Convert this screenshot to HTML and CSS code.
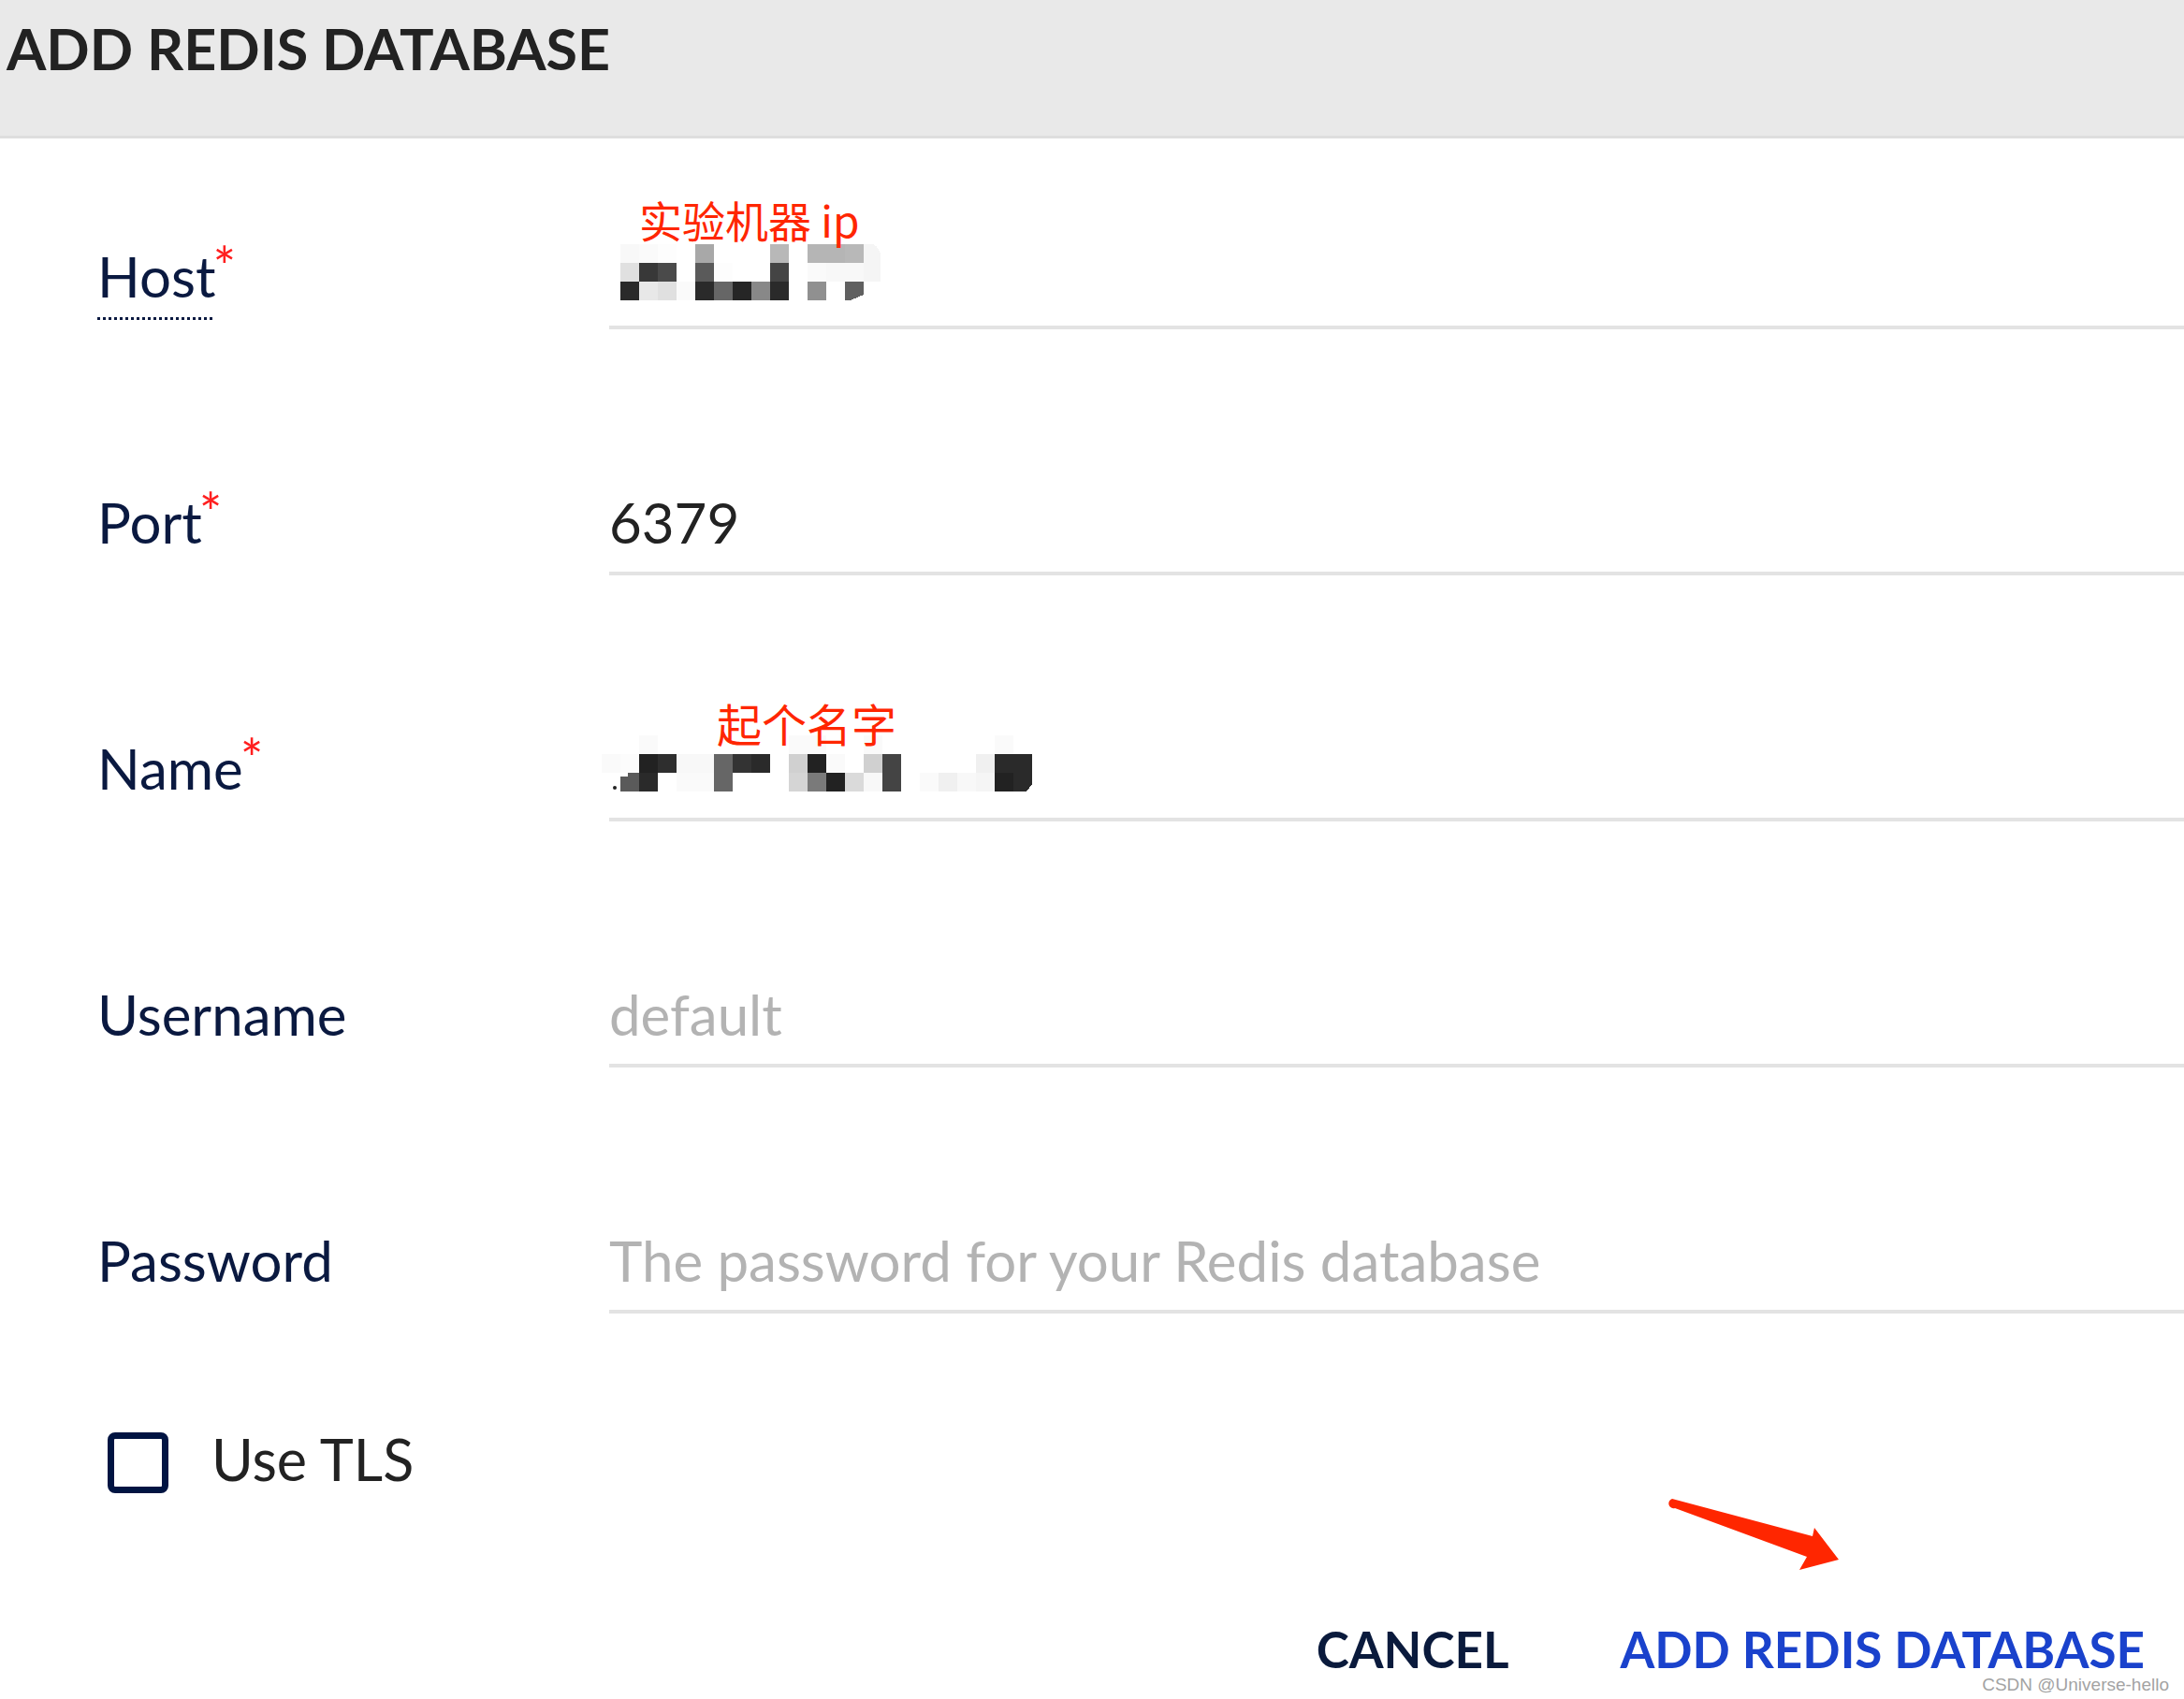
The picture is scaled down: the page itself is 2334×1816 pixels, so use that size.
FILE: index.html
```html
<!DOCTYPE html>
<html lang="en">
<head>
<meta charset="utf-8">
<title>Add Redis Database</title>
<link rel="stylesheet" href="styles.css">
</head>
<body>
<div class="dialog">
  <header class="dialog-header">
    <h1 class="dialog-title">ADD REDIS DATABASE</h1>
  </header>

  <form class="form">
    <div class="rows">
      <div class="row">
        <label class="label"><span class="abbr">Host</span><span class="req">*</span></label>
        <div class="field">
          <svg class="mosaic mosaic-host" width="280" height="60" viewBox="0 0 280 60" shape-rendering="crispEdges">
            <rect x="0" y="0" width="20" height="20" fill="#f8f8f8"/>
            <rect x="0" y="20" width="20" height="20" fill="#e0e0e0"/>
            <rect x="0" y="40" width="20" height="20" fill="#2a2a2a"/>
            <rect x="20" y="0" width="20" height="20" fill="#fafafa"/>
            <rect x="20" y="20" width="20" height="20" fill="#383838"/>
            <rect x="20" y="40" width="20" height="20" fill="#e8e8e8"/>
            <rect x="40" y="0" width="20" height="20" fill="#fdfdfd"/>
            <rect x="40" y="20" width="20" height="20" fill="#4a4a4a"/>
            <rect x="40" y="40" width="20" height="20" fill="#e0e0e0"/>
            <rect x="60" y="40" width="20" height="20" fill="#fafafa"/>
            <rect x="80" y="0" width="20" height="20" fill="#a8a8a8"/>
            <rect x="80" y="20" width="20" height="20" fill="#5a5a5a"/>
            <rect x="80" y="40" width="20" height="20" fill="#2a2a2a"/>
            <rect x="100" y="20" width="20" height="20" fill="#fdfdfd"/>
            <rect x="100" y="40" width="20" height="20" fill="#666666"/>
            <rect x="120" y="40" width="20" height="20" fill="#262626"/>
            <rect x="140" y="40" width="20" height="20" fill="#888888"/>
            <rect x="160" y="0" width="20" height="20" fill="#b8b8b8"/>
            <rect x="160" y="20" width="20" height="20" fill="#444444"/>
            <rect x="160" y="40" width="20" height="20" fill="#2a2a2a"/>
            <rect x="200" y="0" width="20" height="20" fill="#b5b5b5"/>
            <rect x="200" y="20" width="20" height="20" fill="#fafafa"/>
            <rect x="200" y="40" width="20" height="20" fill="#909090"/>
            <rect x="220" y="0" width="20" height="20" fill="#b5b5b5"/>
            <rect x="220" y="20" width="20" height="20" fill="#f8f8f8"/>
            <rect x="240" y="0" width="20" height="20" fill="#b8b8b8"/>
            <rect x="240" y="20" width="20" height="20" fill="#f8f8f8"/>
            <path d="M240 40 H260 V54 L246 60 H240 Z" fill="#606060"/>
            <path d="M260 0 H270 Q278 4 278 14 V40 H260 Z" fill="#f5f5f5"/>
          </svg>
        </div>
      </div>

      <div class="row">
        <label class="label">Port<span class="req">*</span></label>
        <div class="field">6379</div>
      </div>

      <div class="row">
        <label class="label">Name<span class="req">*</span></label>
        <div class="field">
          <svg class="mosaic mosaic-name" width="460" height="60" viewBox="0 0 460 60" shape-rendering="crispEdges">
            <rect x="0" y="20" width="20" height="20" fill="#fafafa"/>
            <circle cx="14" cy="56" r="2" fill="#222222" shape-rendering="auto"/>
            <rect x="20" y="20" width="20" height="20" fill="#fcfcfc"/>
            <rect x="20" y="44" width="20" height="16" fill="#5a5a5a"/>
            <rect x="28" y="40" width="12" height="4" fill="#5a5a5a"/>
            <rect x="40" y="0" width="20" height="20" fill="#fafafa"/>
            <rect x="40" y="20" width="20" height="20" fill="#222222"/>
            <rect x="40" y="40" width="20" height="20" fill="#2a2a2a"/>
            <rect x="60" y="20" width="20" height="20" fill="#2e2e2e"/>
            <rect x="80" y="20" width="20" height="20" fill="#f8f8f8"/>
            <rect x="80" y="40" width="20" height="20" fill="#fafafa"/>
            <rect x="100" y="20" width="20" height="20" fill="#f8f8f8"/>
            <rect x="100" y="40" width="20" height="20" fill="#fafafa"/>
            <rect x="120" y="20" width="20" height="40" fill="#666666"/>
            <rect x="140" y="20" width="20" height="20" fill="#333333"/>
            <rect x="160" y="20" width="20" height="20" fill="#2a2a2a"/>
            <rect x="200" y="0" width="20" height="20" fill="#fafafa"/>
            <rect x="200" y="20" width="20" height="20" fill="#d0d0d0"/>
            <rect x="200" y="40" width="20" height="20" fill="#d5d5d5"/>
            <rect x="220" y="0" width="20" height="20" fill="#fafafa"/>
            <rect x="220" y="20" width="20" height="20" fill="#222222"/>
            <rect x="220" y="40" width="20" height="20" fill="#7a7a7a"/>
            <rect x="240" y="20" width="20" height="20" fill="#fafafa"/>
            <rect x="240" y="40" width="20" height="20" fill="#222222"/>
            <rect x="260" y="40" width="20" height="20" fill="#dadada"/>
            <rect x="280" y="0" width="20" height="20" fill="#fafafa"/>
            <rect x="280" y="20" width="20" height="20" fill="#d0d0d0"/>
            <rect x="280" y="40" width="20" height="20" fill="#f8f8f8"/>
            <rect x="300" y="20" width="20" height="40" fill="#444444"/>
            <rect x="340" y="40" width="20" height="20" fill="#fafafa"/>
            <rect x="360" y="40" width="20" height="20" fill="#f0f0f0"/>
            <rect x="380" y="40" width="20" height="20" fill="#f8f8f8"/>
            <rect x="400" y="20" width="20" height="20" fill="#f0f0f0"/>
            <rect x="400" y="40" width="20" height="20" fill="#f5f5f5"/>
            <rect x="420" y="0" width="20" height="20" fill="#fafafa"/>
            <rect x="420" y="20" width="20" height="20" fill="#2a2a2a"/>
            <rect x="420" y="40" width="20" height="20" fill="#222222"/>
            <path d="M440 20 H460 V52 L454 60 H440 Z" fill="#2a2a2a"/>
          </svg>
        </div>
      </div>

      <div class="row">
        <label class="label">Username</label>
        <div class="field placeholder">default</div>
      </div>

      <div class="row">
        <label class="label">Password</label>
        <div class="field placeholder">The password for your Redis database</div>
      </div>
    </div>

    <div class="check-row">
      <span class="checkbox"></span>
      <span class="check-label">Use TLS</span>
    </div>

    <div class="actions">
      <button type="button" class="btn btn-cancel">CANCEL</button>
      <button type="button" class="btn btn-primary">ADD REDIS DATABASE</button>
    </div>
  </form>

  <div class="note note-host">实验机器 ip</div>
  <div class="note note-name">起个名字</div>

  <svg class="arrow" width="200" height="100" viewBox="0 0 200 100">
    <path d="M7 7 L157 47 L159 38 L185 72 L143 83 L151 69 L10 17 A5 5 0 0 1 7 7 Z" fill="#ff2600"/>
  </svg>

  <div class="watermark">CSDN @Universe-hello</div>
</div>
</body>
</html>
```

FILE: styles.css
```css
* {
  box-sizing: border-box;
  margin: 0;
  padding: 0;
}

html,
body {
  background: #ffffff;
}

body {
  font-family: "Lato", "Noto Sans", sans-serif;
  width: 2334px;
  height: 1816px;
  overflow: hidden;
}

.dialog {
  position: relative;
  height: 1816px;
}

.dialog-header {
  height: 148px;
  background: #e9e9e9;
  border-bottom: 3px solid #dedede;
  padding: 16px 0 0 7px;
}

.dialog-title {
  font-size: 61px;
  font-weight: 700;
  line-height: 72px;
  color: #222222;
}

.form {
  display: flex;
  flex-direction: column;
  padding: 109px 0 0 104px;
}

.rows {
  display: flex;
  flex-direction: column;
  gap: 168px;
}

.row {
  display: grid;
  grid-template-columns: 547px 1fr;
  align-items: end;
}

.label {
  font-size: 60px;
  line-height: 71px;
  padding-top: 3px;
  padding-bottom: 21px;
  color: #0a1940;
  white-space: nowrap;
}

.abbr {
  text-decoration: underline dotted #0a1940;
  text-decoration-thickness: 3px;
  text-underline-offset: 21px;
}

.req {
  color: #ff1f1f;
  font-size: 58px;
  line-height: 0;
  vertical-align: 12px;
  margin-left: -3px;
}

.field {
  height: 95px;
  font-size: 60px;
  line-height: 71px;
  padding-top: 3px;
  padding-bottom: 17px;
  border-bottom: 4px solid #e3e3e3;
  color: #222222;
  white-space: nowrap;
}

.placeholder {
  color: #b3b3b3;
}

.mosaic {
  display: inline-block;
}

.mosaic-host {
  margin-left: 12px;
  vertical-align: -3px;
}

.mosaic-name {
  margin-left: -8px;
  vertical-align: -1px;
}

.check-row {
  display: flex;
  align-items: center;
  gap: 46px;
  margin-top: 120px;
  padding-left: 11px;
}

.checkbox {
  width: 65px;
  height: 65px;
  border: 7px solid #001442;
  border-radius: 8px;
  flex: none;
}

.check-label {
  font-size: 61px;
  line-height: 71px;
  color: #222222;
  margin-bottom: 8px;
}

.actions {
  display: flex;
  justify-content: flex-end;
  gap: 119px;
  margin-top: 128px;
  padding-right: 42px;
}

.btn {
  font-family: inherit;
  font-size: 53px;
  font-weight: 700;
  line-height: 64px;
  background: none;
  border: 0;
  padding: 0;
  cursor: pointer;
}

.btn-cancel {
  color: #0a1a3c;
}

.btn-primary {
  color: #1a42cc;
}

.note {
  position: absolute;
  font-family: "Noto Sans CJK SC", "Noto Sans", sans-serif;
  color: #ff2600;
  line-height: 1;
  white-space: nowrap;
}

.note-host {
  left: 683px;
  top: 211px;
  font-size: 46px;
}

.note-name {
  left: 766px;
  top: 748px;
  font-size: 48px;
}

.arrow {
  position: absolute;
  left: 1780px;
  top: 1595px;
}

.watermark {
  position: absolute;
  right: 16px;
  top: 1789px;
  font-family: "Liberation Sans", Arial, sans-serif;
  font-size: 19px;
  line-height: 24px;
  color: #a3a3a3;
}
```
